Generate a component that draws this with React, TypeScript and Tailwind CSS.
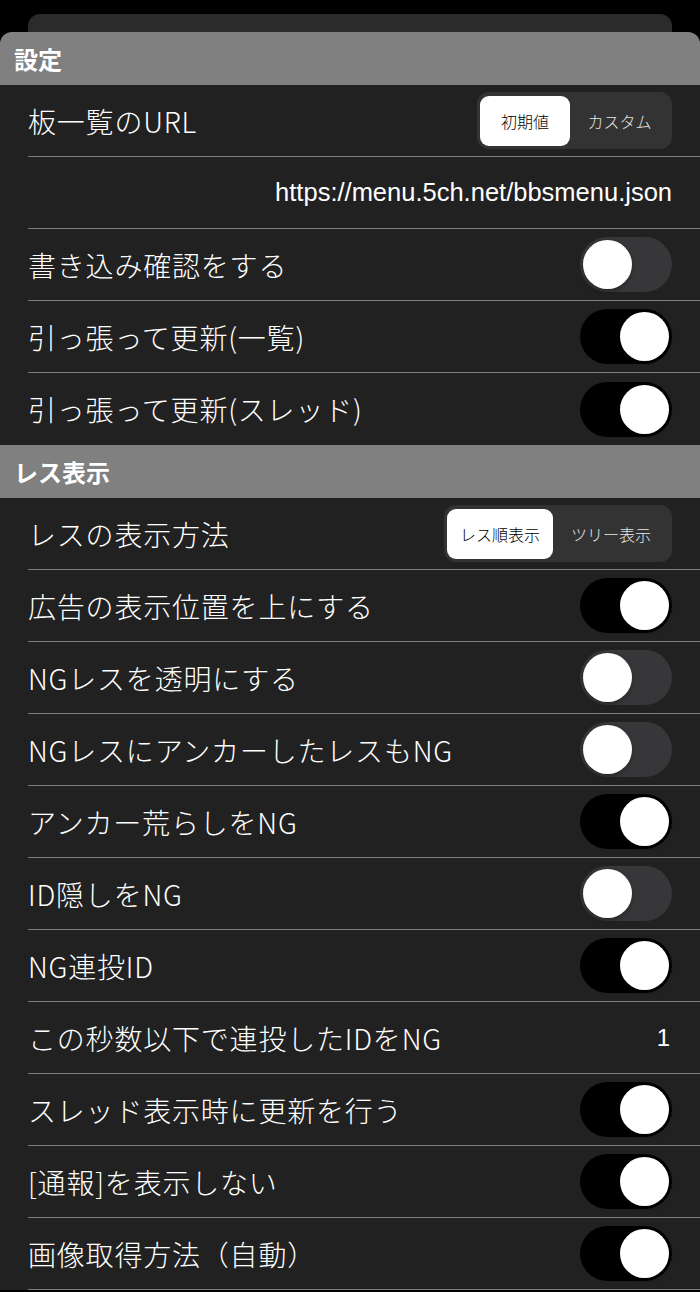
import React from "react";

type Row =
  | { kind: "toggle"; label: string; on: boolean }
  | { kind: "segment"; label: string; options: [string, string]; widths: [string, string]; box: string }
  | { kind: "text"; label: string; value: string }
  | { kind: "url"; value: string };

const jp = "font-['Noto_Sans_CJK_JP','Noto_Sans',sans-serif]";

const general: Row[] = [
  {
    kind: "segment",
    label: "板一覧のURL",
    options: ["初期値", "カスタム"],
    widths: ["w-[90px]", "w-[99px]"],
    box: "w-[195px]",
  },
  { kind: "url", value: "https://menu.5ch.net/bbsmenu.json" },
  { kind: "toggle", label: "書き込み確認をする", on: false },
  { kind: "toggle", label: "引っ張って更新(一覧)", on: true },
  { kind: "toggle", label: "引っ張って更新(スレッド)", on: true },
];

const resView: Row[] = [
  {
    kind: "segment",
    label: "レスの表示方法",
    options: ["レス順表示", "ツリー表示"],
    widths: ["w-[106px]", "w-[116px]"],
    box: "w-[228px]",
  },
  { kind: "toggle", label: "広告の表示位置を上にする", on: true },
  { kind: "toggle", label: "NGレスを透明にする", on: false },
  { kind: "toggle", label: "NGレスにアンカーしたレスもNG", on: false },
  { kind: "toggle", label: "アンカー荒らしをNG", on: true },
  { kind: "toggle", label: "ID隠しをNG", on: false },
  { kind: "toggle", label: "NG連投ID", on: true },
  { kind: "text", label: "この秒数以下で連投したIDをNG", value: "1" },
  { kind: "toggle", label: "スレッド表示時に更新を行う", on: true },
  { kind: "toggle", label: "[通報]を表示しない", on: true },
  { kind: "toggle", label: "画像取得方法（自動）", on: true },
];

function Toggle({ on }: { on: boolean }) {
  return (
    <div
      className={`flex h-[55px] w-[92px] items-center rounded-full p-[3px] ${
        on ? "justify-end bg-black" : "justify-start bg-[#37373a]"
      }`}
    >
      <div className="h-[49px] w-[49px] rounded-full bg-white shadow-[0_2px_4px_rgba(0,0,0,0.3)]" />
    </div>
  );
}

function Segment({
  options,
  widths,
  box,
}: {
  options: [string, string];
  widths: [string, string];
  box: string;
}) {
  return (
    <div className={`flex h-[57px] items-center rounded-[12px] bg-[#333333] p-[3px] ${box}`}>
      <div
        className={`flex h-[50px] items-center justify-center rounded-[9px] bg-white text-[16px] font-light text-black ${widths[0]}`}
      >
        {options[0]}
      </div>
      <div
        className={`flex h-[50px] items-center justify-center text-[16px] font-light text-[#e6e6e6] ${widths[1]}`}
      >
        {options[1]}
      </div>
    </div>
  );
}

function SettingRow({ row, last }: { row: Row; last: boolean }) {
  return (
    <div
      className={`ml-[28px] flex h-[72px] items-center justify-between pr-[28px] ${
        last ? "" : "border-b border-[#7c7c7c]"
      }`}
    >
      {row.kind === "url" ? (
        <span className="ml-auto font-['Liberation_Sans',Arial,sans-serif] text-[25.5px] text-white">
          {row.value}
        </span>
      ) : (
        <>
          <span className="text-[28px] font-light tracking-[0.8px] text-white">{row.label}</span>
          {row.kind === "toggle" && <Toggle on={row.on} />}
          {row.kind === "segment" && (
            <Segment options={row.options} widths={row.widths} box={row.box} />
          )}
          {row.kind === "text" && (
            <span className="pr-[2px] font-['Liberation_Sans',Arial,sans-serif] text-[24px] text-white">
              {row.value}
            </span>
          )}
        </>
      )}
    </div>
  );
}

function Section({ title, rows, closed }: { title: string; rows: Row[]; closed?: boolean }) {
  return (
    <section>
      <div className="flex h-[53px] items-center bg-[#808080] px-[14px] text-[24px] font-bold text-white">
        {title}
      </div>
      {rows.map((r, i) => (
        <SettingRow key={i} row={r} last={!!closed && i === rows.length - 1} />
      ))}
    </section>
  );
}

export default function App() {
  return (
    <div className={`min-h-screen bg-black pt-[14px] ${jp}`}>
      <div className="mx-[28px] h-[18px] rounded-t-[12px] bg-[#2b2b2b]" />
      <div className="overflow-hidden rounded-t-[12px] bg-[#212121]">
        <Section title="設定" rows={general} closed />
        <Section title="レス表示" rows={resView} />
      </div>
    </div>
  );
}
